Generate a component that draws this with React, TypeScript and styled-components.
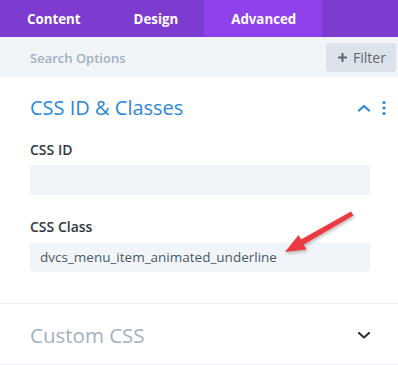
import React from "react";
import styled, { createGlobalStyle } from "styled-components";

const Global = createGlobalStyle`
  html, body { margin: 0; padding: 0; background: #ffffff; }
  body { font-family: "Open Sans", "Noto Sans", sans-serif; -webkit-font-smoothing: antialiased; }
  * { box-sizing: border-box; }
`;

const Page = styled.div`
  position: relative;
  width: 398px;
  height: 365px;
  overflow: hidden;
  background: #ffffff;
`;

const TabBar = styled.div`
  display: flex;
  height: 37px;
  background: #7e3bd0;
`;

const Tab = styled.div<{ $active?: boolean }>`
  display: flex;
  align-items: center;
  padding: 0 26px 0 27px;
  height: 100%;
  font-size: 13.3px;
  font-weight: 700;
  color: #ffffff;
  background: ${(p) => (p.$active ? "#8f42ec" : "transparent")};
`;

const SearchBar = styled.div`
  display: flex;
  align-items: center;
  justify-content: space-between;
  height: 41px;
  padding: 0 2px 0 30px;
  background: #f1f5f9;
`;

const SearchText = styled.span`
  font-size: 13px;
  font-weight: 600;
  color: #a3b0bf;
`;

const FilterButton = styled.div`
  display: flex;
  align-items: center;
  gap: 5px;
  height: 29px;
  width: 70px;
  padding-left: 11px;
  border-radius: 3px;
  background: #dde3ea;
  color: #5a6672;
  font-size: 14px;
  font-weight: 400;
`;

const Section = styled.div<{ $padTop: number; $padBottom: number }>`
  padding: ${(p) => p.$padTop}px 28px ${(p) => p.$padBottom}px 30px;
  border-bottom: 1px solid #eaedf1;
`;

const Header = styled.div`
  display: flex;
  align-items: center;
  justify-content: space-between;
  height: 26px;
`;

const Title = styled.div<{ $open?: boolean; $size: number }>`
  font-size: ${(p) => p.$size}px;
  font-weight: 400;
  line-height: 26px;
  color: ${(p) => (p.$open ? "#2b87da" : "#a3b0c2")};
`;

const Controls = styled.div`
  display: flex;
  align-items: center;
  gap: 10px;
  margin-right: -17px;
`;

const Field = styled.div<{ $top: number }>`
  margin-top: ${(p) => p.$top}px;
`;

const Label = styled.div`
  font-size: 14px;
  font-weight: 600;
  line-height: 18px;
  color: #32373c;
  margin-bottom: 6px;
`;

const Input = styled.div`
  height: 30px;
  width: 340px;
  border-radius: 3px;
  background: #f1f5f9;
  padding: 0 10px;
  display: flex;
  align-items: center;
  font-size: 13.5px;
  color: #4c5866;
`;

const Overlay = styled.svg`
  position: absolute;
  left: 0;
  top: 0;
  pointer-events: none;
`;

const Spacer = styled.span`
  width: 6px;
`;

const ChevronUp = () => (
  <svg width="14" height="10" viewBox="0 0 14 10">
    <polyline points="2,7.5 7,3 12,7.5" fill="none" stroke="#2b87da" strokeWidth="2.2" strokeLinecap="round" strokeLinejoin="round" />
  </svg>
);

const ChevronDown = () => (
  <svg width="14" height="10" viewBox="0 0 14 10">
    <polyline points="2,3 7,7.5 12,3" fill="none" stroke="#32373c" strokeWidth="2.2" strokeLinecap="round" strokeLinejoin="round" />
  </svg>
);

const Dots = () => (
  <svg width="6" height="16" viewBox="0 0 6 16">
    <circle cx="3" cy="2.5" r="1.6" fill="#2b87da" />
    <circle cx="3" cy="8" r="1.6" fill="#2b87da" />
    <circle cx="3" cy="13.5" r="1.6" fill="#2b87da" />
  </svg>
);

export default function App() {
  return (
    <Page>
      <Global />
      <TabBar>
        <Tab>Content</Tab>
        <Tab>Design</Tab>
        <Tab $active>Advanced</Tab>
      </TabBar>
      <SearchBar>
        <SearchText>Search Options</SearchText>
        <FilterButton>
          <svg width="11" height="11" viewBox="0 0 11 11">
            <path d="M5.5 1 V10 M1 5.5 H10" stroke="#5a6672" strokeWidth="2" />
          </svg>
          Filter
        </FilterButton>
      </SearchBar>
      <Section $padTop={17} $padBottom={31}>
        <Header>
          <Title $open $size={20}>CSS ID &amp; Classes</Title>
          <Controls>
            <ChevronUp />
            <Dots />
          </Controls>
        </Header>
        <Field $top={20}>
          <Label>CSS ID</Label>
          <Input />
        </Field>
        <Field $top={23}>
          <Label>CSS Class</Label>
          <Input>dvcs_menu_item_animated_underline</Input>
        </Field>
      </Section>
      <Section $padTop={18} $padBottom={16}>
        <Header>
          <Title $size={20.5}>Custom CSS</Title>
          <Controls>
            <ChevronDown />
            <Spacer />
          </Controls>
        </Header>
      </Section>
      <Overlay width="398" height="365" viewBox="0 0 398 365">
        <defs>
          <filter id="sh" x="-20%" y="-20%" width="140%" height="140%">
            <feDropShadow dx="1" dy="2" stdDeviation="1.5" floodColor="#000" floodOpacity="0.25" />
          </filter>
        </defs>
        <g filter="url(#sh)" fill="#ea3a3f">
          <polygon points="353.5,215.5 351,211.5 300,240 303,245" />
          <polygon points="285,252 298.5,235 306.5,249.5" />
        </g>
      </Overlay>
    </Page>
  );
}
